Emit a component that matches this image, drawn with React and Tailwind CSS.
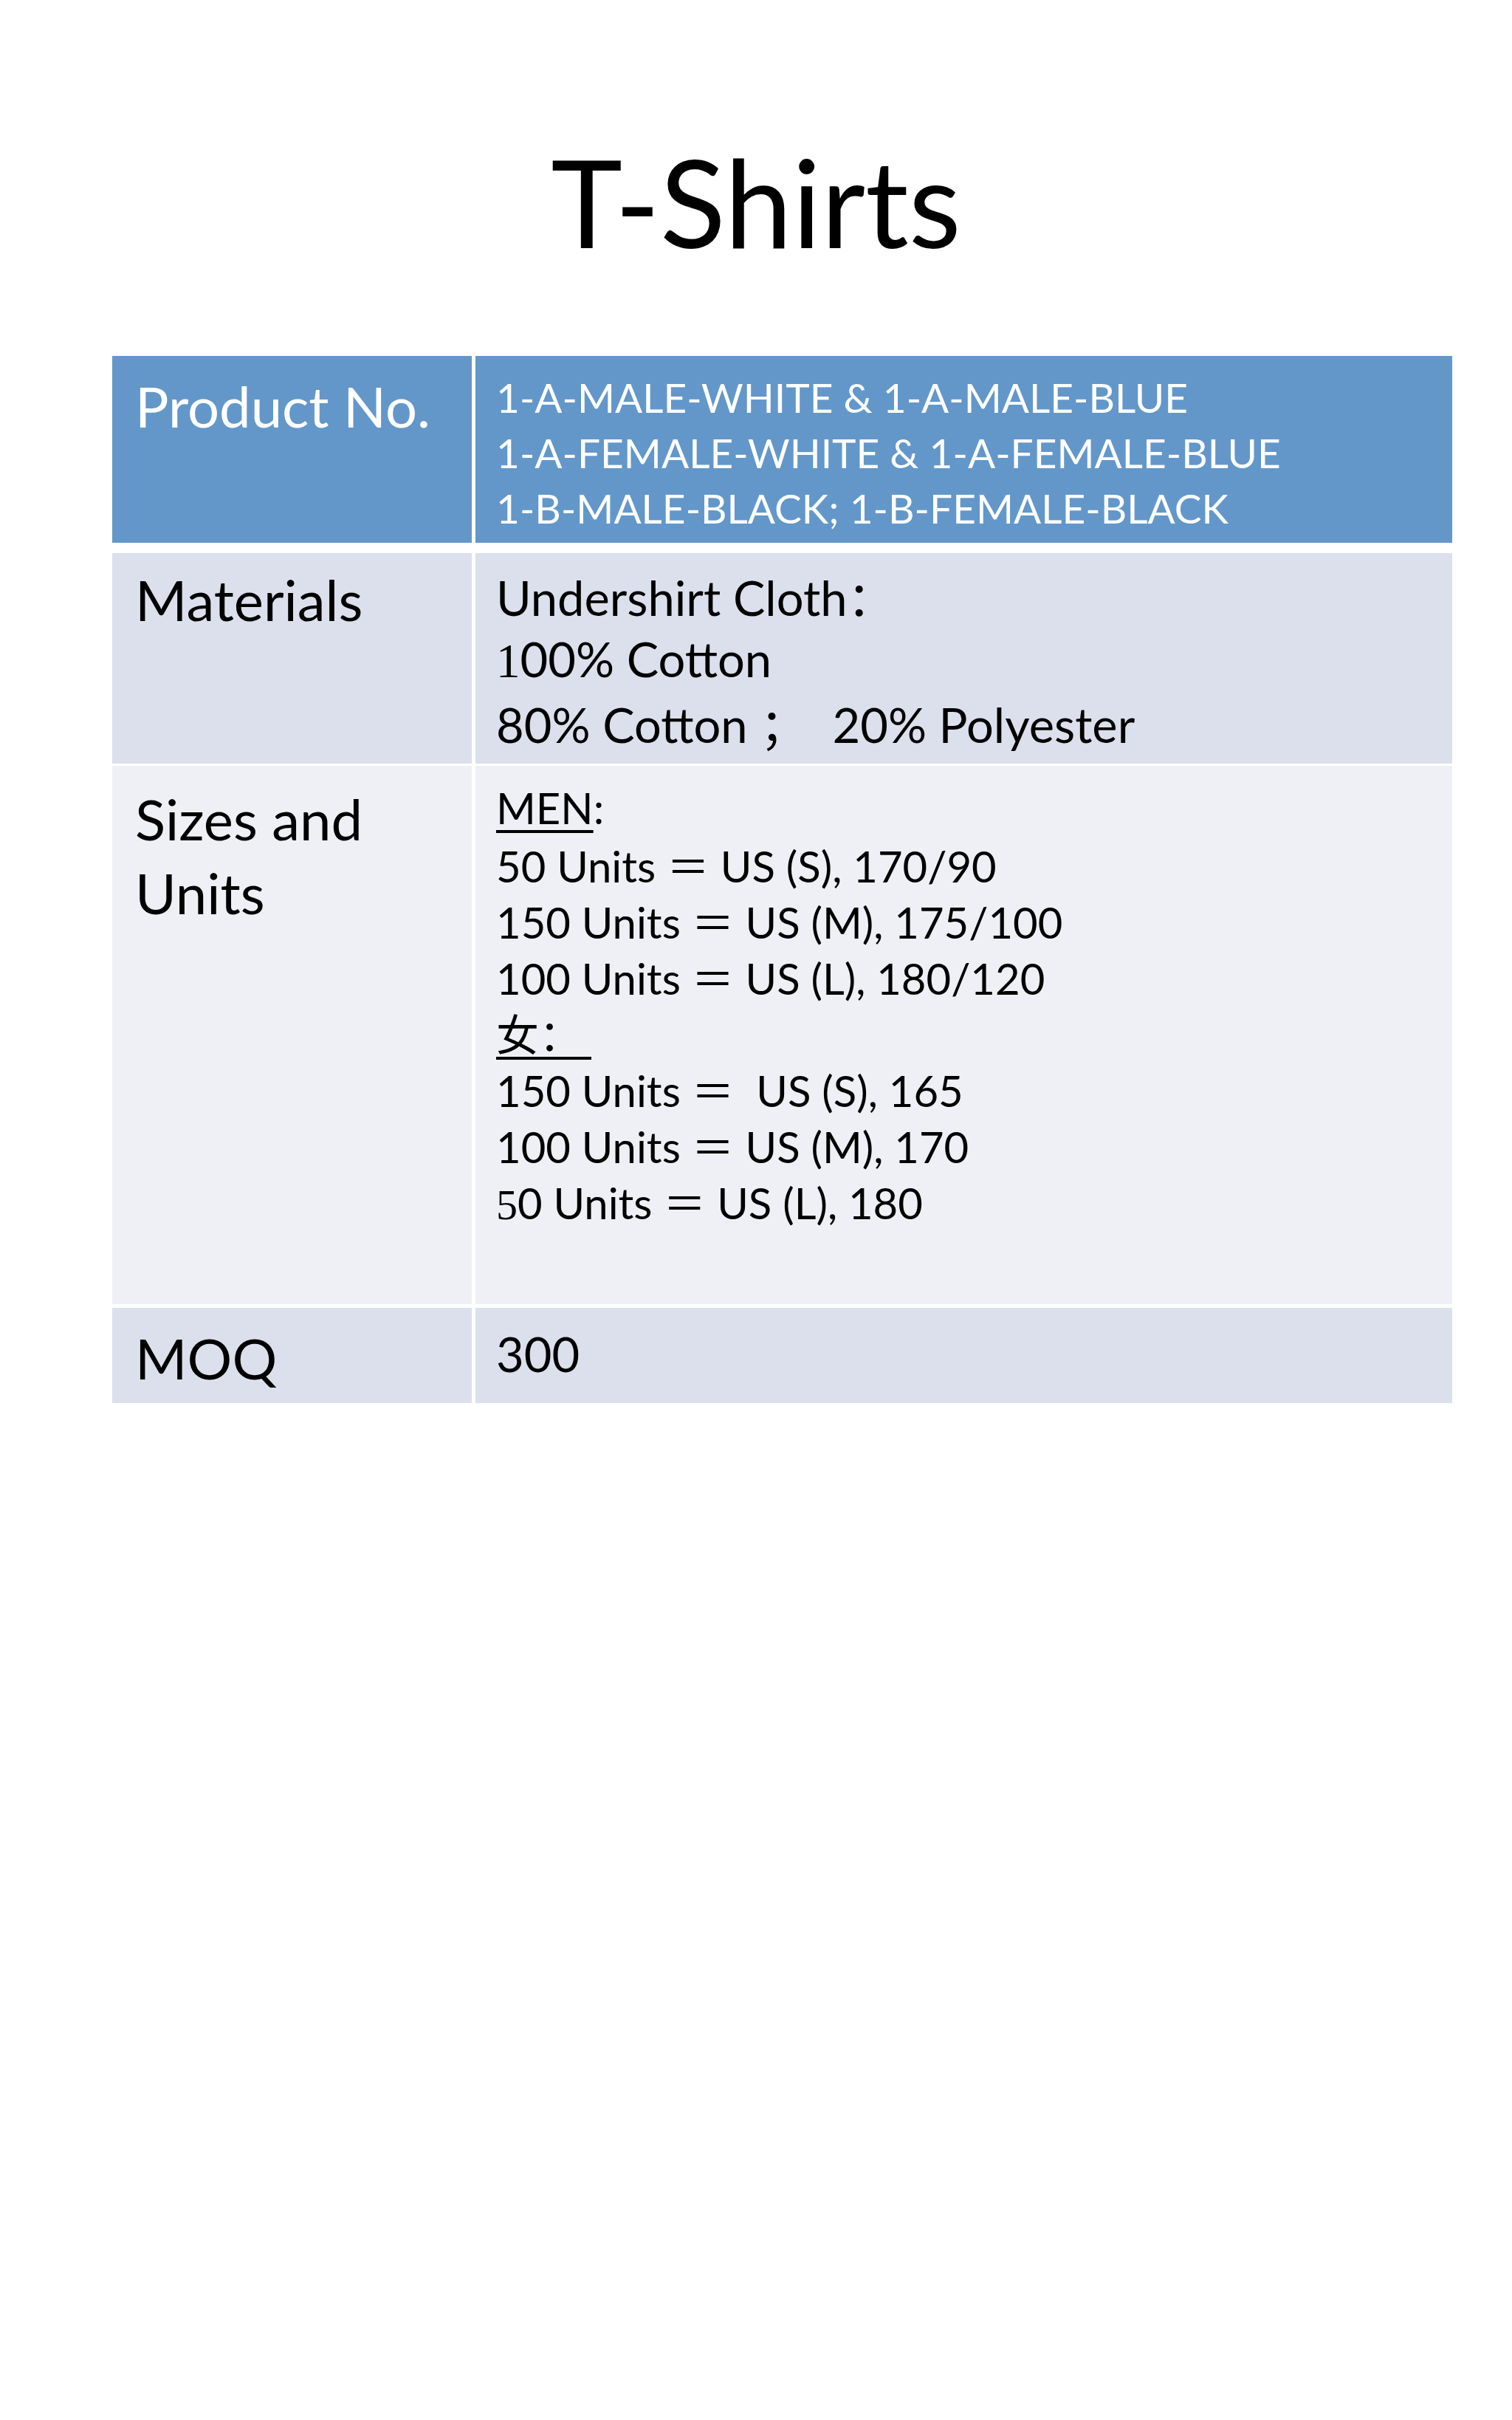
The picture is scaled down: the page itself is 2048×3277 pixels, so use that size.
import React from "react";

const Serif = ({ children }) => (
  <span className="font-['Liberation_Serif',serif]">{children}</span>
);

const Cjk = ({ children, className = "" }) => (
  <span className={`font-['Noto_Sans_CJK_SC',sans-serif] ${className}`}>{children}</span>
);

const Eq = () => <Cjk>＝</Cjk>;

const Row = ({ label, bg, height, labelPad, valuePad, labelClass = "", children, className = "" }) => (
  <div className={`flex gap-[5px] ${height} ${className}`}>
    <div className={`w-[487px] shrink-0 ${bg} pl-[31px] ${labelPad}`}>
      <div className={`text-[76px] leading-[100px] ${labelClass}`}>{label}</div>
    </div>
    <div className={`flex-1 ${bg} pl-[28px] ${valuePad}`}>{children}</div>
  </div>
);

export default function App() {
  return (
    <div className="min-h-[3277px] w-full bg-white font-['Lato',sans-serif] text-black">
      {/* Title */}
      <h1 className="pt-[175px] text-center text-[164px] leading-[196px] font-normal">T-Shirts</h1>

      {/* Spec table */}
      <div className="ml-[152px] mt-[111px] w-[1815px]">
        <Row
          label="Product No."
          bg="bg-[#6397c9]"
          height="h-[253px]"
          labelPad="pt-[18px]"
          valuePad="pt-[19px]"
          labelClass="text-white"
        >
          <div className="text-[55px] text-white">
            <div className="h-[75px] leading-[75px]">1-A-MALE-WHITE &amp; 1-A-MALE-BLUE</div>
            <div className="h-[75px] leading-[75px]">1-A-FEMALE-WHITE &amp; 1-A-FEMALE-BLUE</div>
            <div className="h-[75px] leading-[75px]">1-B-MALE-BLACK; 1-B-FEMALE-BLACK</div>
          </div>
        </Row>

        <Row
          label="Materials"
          bg="bg-[#dbe0ec]"
          height="h-[285px]"
          labelPad="pt-[13px]"
          valuePad="pt-[14px]"
          className="mt-[14px]"
        >
          <div className="text-[65px]">
            <div className="h-[86px] leading-[86px]">
              Undershirt Cloth<Cjk>：</Cjk>
            </div>
            <div className="h-[86px] leading-[86px]">
              <Serif>1</Serif>00% Cotton
            </div>
            <div className="h-[86px] leading-[86px]">
              80% Cotton <Cjk>；</Cjk>&nbsp; 20% Polyester
            </div>
          </div>
        </Row>

        <Row
          label={
            <>
              Sizes and
              <br />
              Units
            </>
          }
          bg="bg-[#eef0f5]"
          height="h-[729px]"
          labelPad="pt-[22px]"
          valuePad="pt-[19px]"
          className="mt-[3px]"
        >
          <div className="text-[58px]">
            <div className="h-[76px] leading-[76px]">
              <span className="underline decoration-[4px] underline-offset-[8px]">MEN</span>:
            </div>
            <div className="h-[76px] leading-[76px]">
              50 Units <Eq /> US (S), 170/90
            </div>
            <div className="h-[76px] leading-[76px]">
              150 Units <Eq /> US (M), 175/100
            </div>
            <div className="h-[76px] leading-[76px]">
              100 Units <Eq /> US (L), 180/120
            </div>
            <div className="h-[76px] leading-[76px]">
              <Cjk className="underline decoration-[4px] underline-offset-[8px]">女：&nbsp;</Cjk>
            </div>
            <div className="h-[76px] leading-[76px]">
              150 Units <Eq />&nbsp; US (S), 165
            </div>
            <div className="h-[76px] leading-[76px]">
              100 Units <Eq /> US (M), 170
            </div>
            <div className="h-[76px] leading-[76px]">
              <Serif>5</Serif>0 Units <Eq /> US (L), 180
            </div>
          </div>
        </Row>

        <Row
          label="MOQ"
          bg="bg-[#dbe0ec]"
          height="h-[129px]"
          labelPad="pt-[18px]"
          valuePad="pt-[19px]"
          className="mt-[5px]"
        >
          <div className="text-[65px] leading-[86px]">300</div>
        </Row>
      </div>
    </div>
  );
}
